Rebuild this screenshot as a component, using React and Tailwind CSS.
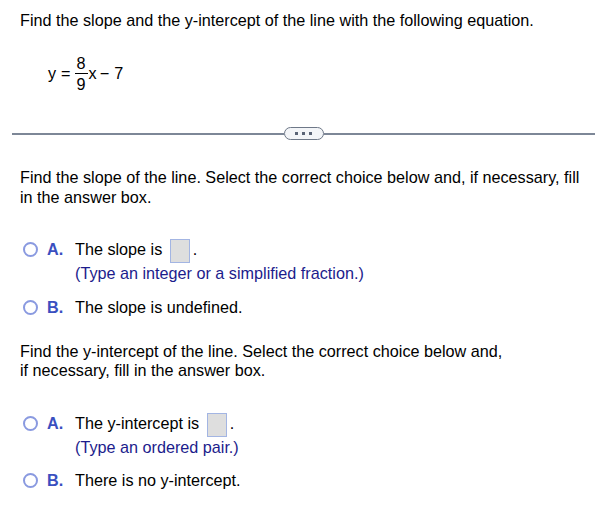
import React from 'react';

const font = { fontFamily: '"Liberation Sans", Arial, sans-serif' };

function Radio() {
  return <span className="inline-block w-[15px] h-[15px] rounded-full border-2 border-[#8a9ae0] bg-white shrink-0" />;
}

function AnswerBox() {
  return <span className="inline-block align-middle w-[20px] h-[24px] -my-[4px] bg-[#dedede] border border-[#a3b5e3] mx-[3px]" />;
}

function Choice({ letter, children, hint }) {
  return (
    <div className="flex items-start">
      <div className="flex items-center h-[20px] w-[75px] shrink-0 pl-[23px] gap-[9px]">
        <Radio />
        <span className="font-bold text-[#3a4fc0]">{letter}.</span>
      </div>
      <div>
        <div className="h-[20px]">{children}</div>
        {hint && <div className="text-[#1c1c8c] mt-[4px]">{hint}</div>}
      </div>
    </div>
  );
}

export default function App() {
  return (
    <div className="w-[595px] h-[530px] bg-white text-[#000] text-[16.2px] leading-[20px]" style={font}>
      <div className="pt-[10px] pl-[20px]">
        Find the slope and the y-intercept of the line with the following equation.
      </div>

      {/* equation */}
      <div className="flex items-center pl-[48px] mt-[21px] h-[44px]">
        <span>y</span>
        <span className="ml-[5px] mr-[4px]">=</span>
        <span className="inline-flex flex-col items-center leading-[20px]">
          <span>8</span>
          <span className="block w-[13px] h-[1px] bg-black" />
          <span>9</span>
        </span>
        <span className="ml-[1px]">x</span>
        <span className="ml-[3px] mr-[5px]">−</span>
        <span>7</span>
      </div>

      {/* separator */}
      <div className="flex items-center mt-[32px] pl-[12px]">
        <div className="flex-1 h-[2px] bg-[#7d8797]" />
        <div className="flex items-center justify-center gap-[4px] w-[40px] h-[13px] rounded-full border border-[#6e7888] bg-[#f3f5f8]">
          <span className="w-[3px] h-[3px] bg-[#5a6476]" />
          <span className="w-[3px] h-[3px] bg-[#5a6476]" />
          <span className="w-[3px] h-[3px] bg-[#5a6476]" />
        </div>
        <div className="flex-1 h-[2px] bg-[#7d8797]" />
      </div>

      <div className="pl-[20px] pr-[10px] mt-[27px]">
        Find the slope of the line. Select the correct choice below and, if necessary, fill in the answer box.
      </div>

      <div className="mt-[32px] flex flex-col gap-[14px]">
        <Choice letter="A" hint="(Type an integer or a simplified fraction.)">
          The slope is <AnswerBox />.
        </Choice>
        <Choice letter="B">The slope is undefined.</Choice>
      </div>

      <div className="pl-[20px] w-[505px] mt-[25px] leading-[19px]">
        Find the y-intercept of the line. Select the correct choice below and, if necessary, fill in the answer box.
      </div>

      <div className="mt-[33px] flex flex-col gap-[13px]">
        <Choice letter="A" hint="(Type an ordered pair.)">
          The y-intercept is <AnswerBox />.
        </Choice>
        <Choice letter="B">There is no y-intercept.</Choice>
      </div>
    </div>
  );
}
